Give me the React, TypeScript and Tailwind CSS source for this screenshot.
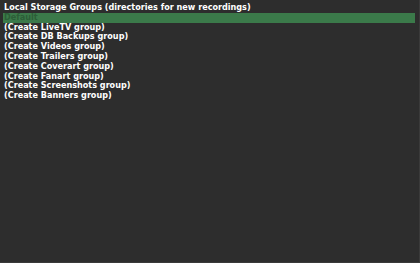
const groups = [
  "LiveTV",
  "DB Backups",
  "Videos",
  "Trailers",
  "Coverart",
  "Fanart",
  "Screenshots",
  "Banners",
];

export default function App() {
  return (
    <div className="w-[420px] h-[263px] bg-[#2d2d2d] text-white font-['DejaVu_Sans_Condensed','DejaVu_Sans',sans-serif] font-bold text-[9px] leading-[9.8px] overflow-hidden">
      <div className="h-full border-r border-b border-[#3a3a3a] pt-[3px] pl-[3px] pr-[3px]">
        <div className="pl-px">Local Storage Groups (directories for new recordings)</div>
        <div className="bg-[#3b7a4a] text-[#2c5e38] pl-px mr-px">Default</div>
        {groups.map((g) => (
          <div key={g} className="pl-px">
            (Create {g} group)
          </div>
        ))}
      </div>
    </div>
  );
}
